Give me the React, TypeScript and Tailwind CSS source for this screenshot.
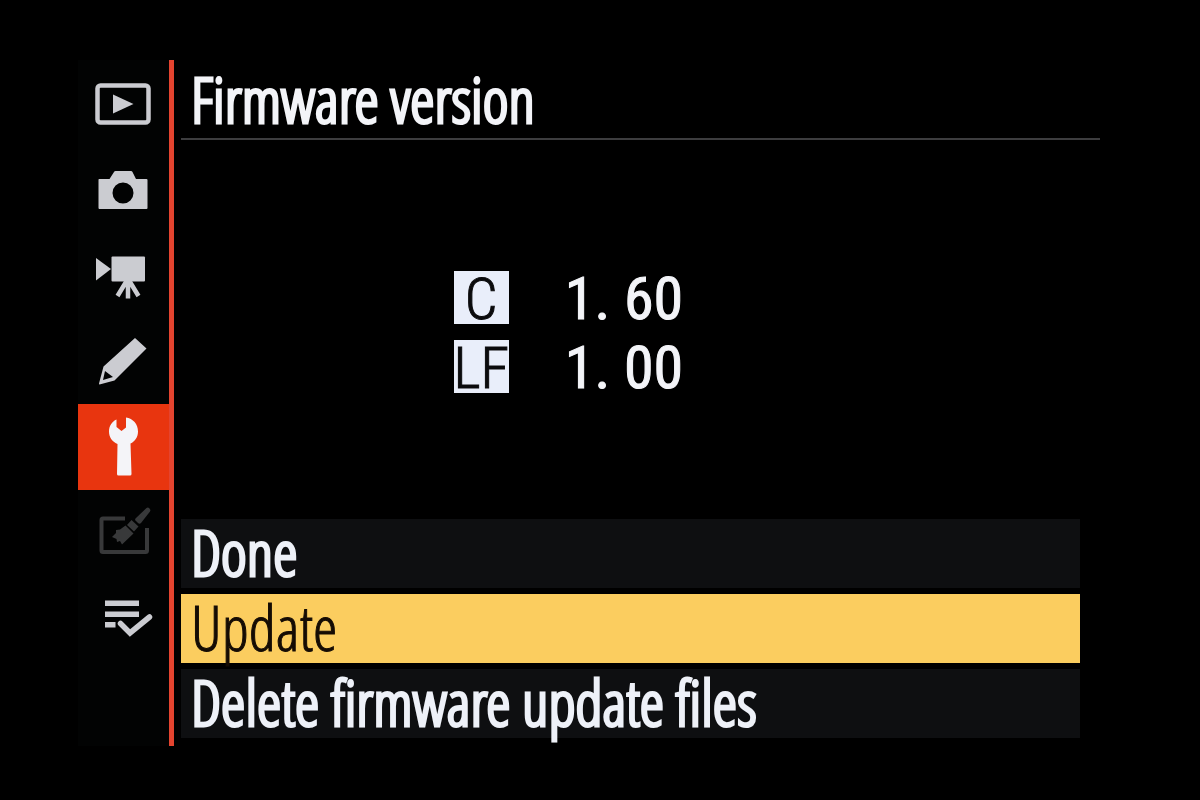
import { useState, type ReactNode } from 'react'
import { clsx } from 'clsx'

interface MenuTab {
  id: string
  label: string
  disabled?: boolean
  icon: ReactNode
}

const tabs: MenuTab[] = [
  {
    id: 'playback',
    label: 'Playback menu',
    icon: (
      <>
        <rect x="19.5" y="25.5" width="51" height="37" rx="3" fill="none" stroke="currentColor" strokeWidth="4.5" />
        <path d="M35 34.5 55.5 44 35 53.5Z" />
      </>
    ),
  },
  {
    id: 'photo',
    label: 'Photo shooting menu',
    icon: (
      <path
        fillRule="evenodd"
        d="M21 33H31.5L36 26Q36.5 25 37.5 25H53Q54 25 54.5 26L58 33H68.5Q69.5 33 69.5 34V62Q69.5 63 68.5 63H21.5Q20.5 63 20.5 62V34Q20.5 33 21 33ZM45 36.5a10.5 10.5 0 1 0 0 21a10.5 10.5 0 1 0 0-21Z"
      />
    ),
  },
  {
    id: 'video',
    label: 'Video recording menu',
    icon: (
      <>
        <path d="M18 26 33 37 18 48.5Z" />
        <rect x="33.5" y="24.5" width="33.5" height="25" rx="1" />
        <path d="M46 48H54V53H46Z" />
        <path
          d="M48 50 39.5 64M50 50V66.5M52 50 60.5 64"
          fill="none"
          stroke="currentColor"
          strokeWidth="4.5"
        />
      </>
    ),
  },
  {
    id: 'custom',
    label: 'Custom settings menu',
    icon: (
      <path
        fillRule="evenodd"
        d="M57 20 68.5 30.5 36.5 62.5 21.5 66.5Q21 66.5 21 65.5L25.5 48.5ZM27 53 25 62 35 59Z"
      />
    ),
  },
  {
    id: 'setup',
    label: 'Setup menu',
    icon: (
      <path d="M38.5 15.5V23L43.5 27 48 23.5V13.5C55 14.5 60 20 60 27.5C60 33 57 37.5 52.5 39.5L53.5 70Q53.5 71.5 52 71.5H40.5Q39 71.5 39 70L39.5 40C34 37.5 31 33 31 27.5C31 22 34 17.5 38.5 15.5Z" />
    ),
  },
  {
    id: 'retouch',
    label: 'Retouch menu',
    disabled: true,
    icon: (
      <>
        <path
          d="M47 28.5H25Q23.5 28.5 23.5 30V60.5Q23.5 62 25 62H67.5Q69 62 69 60.5V38"
          fill="none"
          stroke="currentColor"
          strokeWidth="4"
        />
        <path d="M58 28 68.5 18Q70 17 71.5 18.5Q73 20 72 21.5L63 33Q61.5 34.5 60 33L57.5 30.5Q56.5 29.5 58 28Z" />
        <path d="M53.5 30 60.5 36.5 56 41.5 49 35Z" />
        <path d="M47.5 35.5 55.5 43.5 44 54.5 42 51 39 52 38.5 49 34 47 38 43 38 40 42 39.5Z" />
      </>
    ),
  },
  {
    id: 'mymenu',
    label: 'My menu',
    icon: (
      <>
        <path d="M27 24.5H61V30H27ZM27 35.5H61V41H27ZM27 46H37.5V51.5H27Z" />
        <path
          d="M42.5 47.5 52 57 71.5 41"
          fill="none"
          stroke="currentColor"
          strokeWidth="5.5"
          strokeLinecap="round"
        />
      </>
    ),
  },
]

const versions = [
  { code: 'C', value: '1. 60' },
  { code: 'LF', value: '1. 00' },
]

const actions = ['Done', 'Update', 'Delete firmware update files']

function TabBar({ active, onSelect }: { active: string; onSelect: (id: string) => void }) {
  return (
    <nav className="flex w-24 shrink-0 flex-col border-r-5 border-[#e4442f] bg-[#020303]">
      {tabs.map((tab) => (
        <button
          key={tab.id}
          type="button"
          aria-label={tab.label}
          disabled={tab.disabled}
          onClick={() => onSelect(tab.id)}
          className={clsx(
            'h-[86px] w-full',
            tab.id === active && 'bg-[#e8350f] text-[#f4f4f8]',
            tab.id !== active && (tab.disabled ? 'text-[#38393a]' : 'text-[#cbccd1]'),
          )}
        >
          <svg viewBox="0 0 91 86" className="h-full w-full" fill="currentColor" aria-hidden="true">
            {tab.icon}
          </svg>
        </button>
      ))}
    </nav>
  )
}

function VersionInfo() {
  return (
    <dl className="flex flex-1 flex-col items-center justify-center gap-4 pt-1 pr-36 font-['Roboto_Condensed','Liberation_Sans',sans-serif]">
      {versions.map((v) => (
        <div key={v.code} className="flex h-[53px] items-center gap-14">
          <dt className="flex h-full w-[55px] items-center justify-center bg-[#e9eefa] pt-1 text-[58px] leading-[52px] font-light text-[#0b0b0d] [-webkit-text-stroke:1px_currentColor]">
            {v.code}
          </dt>
          <dd className="pt-1 text-[60px] leading-[52px] text-[#f3f4f8] [-webkit-text-stroke:1px_currentColor]">
            {v.value}
          </dd>
        </div>
      ))}
    </dl>
  )
}

export default function App() {
  const [tab, setTab] = useState('setup')
  const [selected, setSelected] = useState('Update')

  return (
    <div className="flex min-h-screen bg-black pt-[60px] pr-[100px] pb-[54px] pl-[78px] font-['Open_Sans_Condensed_Light','Roboto_Condensed','Liberation_Sans',sans-serif]">
      <TabBar active={tab} onSelect={setTab} />
      <main className="flex min-w-0 flex-1 flex-col pb-2 pl-[7px]">
        <h1 className="h-20 border-b-2 border-[#3d3d3f] pl-[10px] text-[62px] leading-[78px] font-normal whitespace-nowrap text-[#f3f4f8] [-webkit-text-stroke:3px_currentColor]">
          Firmware version
        </h1>
        <VersionInfo />
        <div className="mr-5 flex flex-col gap-[6px]">
          {actions.map((action) => (
            <button
              key={action}
              type="button"
              onClick={() => setSelected(action)}
              className={clsx(
                'h-[69px] w-full pb-1 pl-[10px] text-left text-[62px] leading-[64px] whitespace-nowrap',
                action === selected
                  ? 'bg-[#fbcd5f] text-[#150c04] [-webkit-text-stroke:1px_currentColor]'
                  : 'bg-[#0e0f11] text-[#eef1f8] [-webkit-text-stroke:3px_currentColor]',
              )}
            >
              {action}
            </button>
          ))}
        </div>
      </main>
    </div>
  )
}
